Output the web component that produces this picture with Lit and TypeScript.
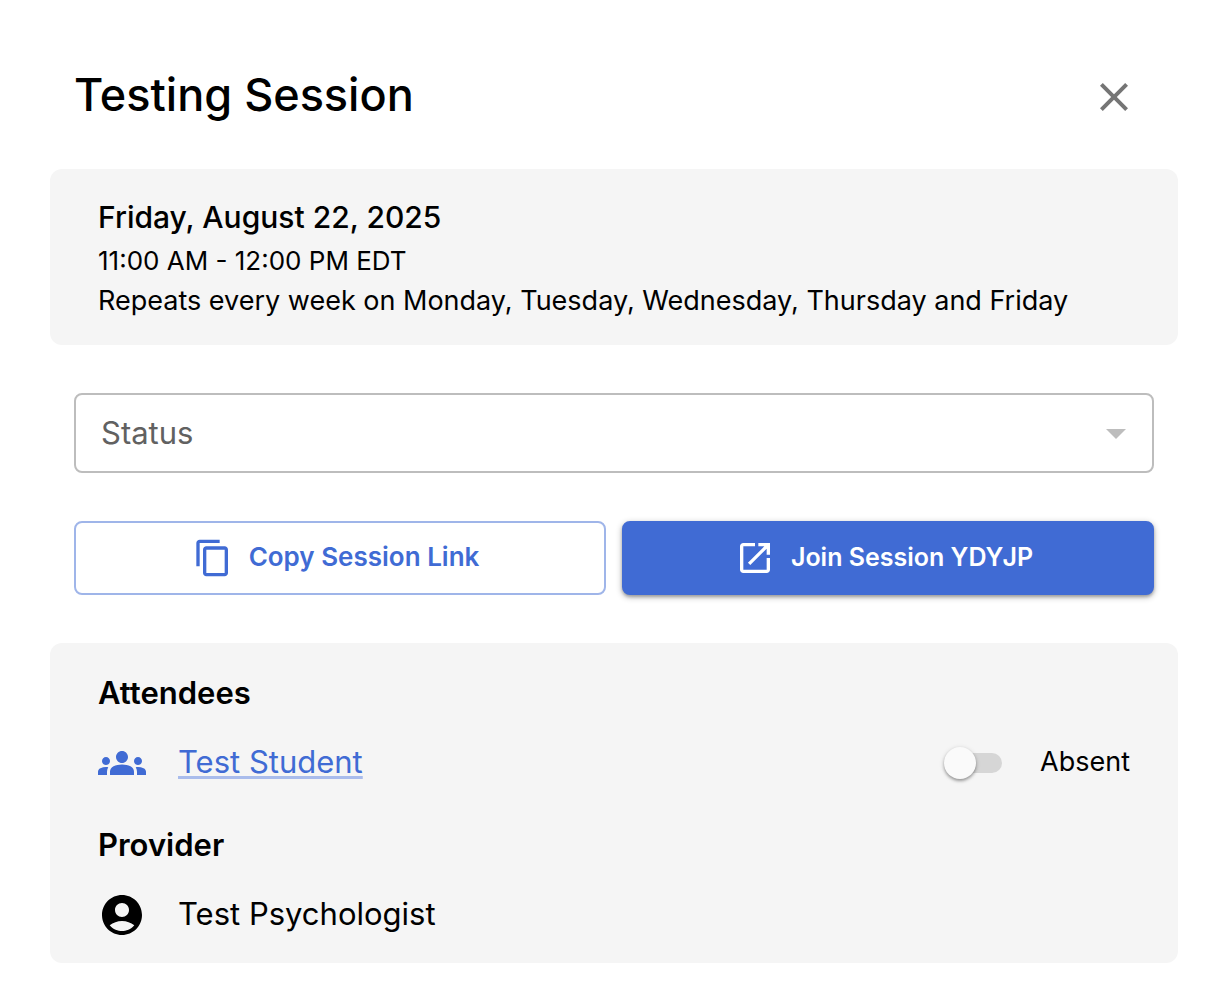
import { LitElement, html, css } from "lit";
import { customElement, property, state } from "lit/decorators.js";

const ICONS: Record<string, string> = {
  close:
    "M19 6.41 17.59 5 12 10.59 6.41 5 5 6.41 10.59 12 5 17.59 6.41 19 12 13.41 17.59 19 19 17.59 13.41 12z",
  copy:
    "M16 1H4c-1.1 0-2 .9-2 2v14h2V3h12V1zm3 4H8c-1.1 0-2 .9-2 2v14c0 1.1.9 2 2 2h11c1.1 0 2-.9 2-2V7c0-1.1-.9-2-2-2zm0 16H8V7h11v14z",
  open:
    "M19 19H5V5h7V3H5c-1.11 0-2 .9-2 2v14c0 1.1.89 2 2 2h14c1.1 0 2-.9 2-2v-7h-2v7zM14 3v2h3.59l-9.83 9.83 1.41 1.41L19 6.41V10h2V3h-7z",
  groups:
    "M12 12.75c1.63 0 3.07.39 4.24.9 1.08.48 1.76 1.56 1.76 2.73V18H6v-1.61c0-1.18.68-2.26 1.76-2.73 1.17-.52 2.61-.91 4.24-.91zM4 13c1.1 0 2-.9 2-2s-.9-2-2-2-2 .9-2 2 .9 2 2 2zm1.13 1.1c-.37-.06-.74-.1-1.13-.1-.99 0-1.93.21-2.78.58C.48 14.9 0 15.62 0 16.43V18h4.5v-1.61c0-.83.23-1.61.63-2.29zM20 13c1.1 0 2-.9 2-2s-.9-2-2-2-2 .9-2 2 .9 2 2 2zm4 3.43c0-.81-.48-1.53-1.22-1.85-.85-.37-1.79-.58-2.78-.58-.39 0-.76.04-1.13.1.4.68.63 1.46.63 2.29V18H24v-1.57zM12 6c1.66 0 3 1.34 3 3s-1.34 3-3 3-3-1.34-3-3 1.34-3 3-3z",
  account:
    "M12 2C6.48 2 2 6.48 2 12s4.48 10 10 10 10-4.48 10-10S17.52 2 12 2zm0 4c1.93 0 3.5 1.57 3.5 3.5S13.93 13 12 13s-3.5-1.57-3.5-3.5S10.07 6 12 6zm0 14c-2.03 0-4.43-.82-6.14-2.88C7.55 15.8 9.68 15 12 15s4.45.8 6.14 2.12C16.43 19.18 14.03 20 12 20z",
  arrow: "M7 10l5 5 5-5z",
};

@customElement("ui-icon")
export class UiIcon extends LitElement {
  @property() name = "close";

  static styles = css`
    :host {
      display: block;
      flex: none;
      width: 48px;
      height: 48px;
    }
    .glyph {
      display: block;
      width: 100%;
      height: 100%;
      fill: currentColor;
    }
  `;

  render() {
    return html`<svg class="glyph" viewBox="0 0 24 24" aria-hidden="true">
      <path d=${ICONS[this.name]}></path>
    </svg>`;
  }
}

@customElement("app-root")
export class AppRoot extends LitElement {
  @state() private attending = false;

  static styles = css`
    :host {
      display: block;
      background: #fff;
      color: #000;
      font-family: Inter, "Liberation Sans", sans-serif;
      font-size: 27px;
      line-height: 40px;
      --blue: #406bd4;
    }
    * {
      box-sizing: border-box;
    }
    .dialog {
      display: flex;
      flex-direction: column;
      gap: 48px;
      padding: 73px 38px 43px 50px;
    }
    .header {
      display: flex;
      align-items: center;
      justify-content: space-between;
      padding: 0 40px 0 24px;
    }
    h1,
    h2,
    p {
      margin: 0;
    }
    h1 {
      padding-bottom: 4px;
      font-size: 45px;
      line-height: 44px;
      font-weight: 500;
    }
    button,
    select {
      font: inherit;
      cursor: pointer;
    }
    .close {
      padding: 0;
      border: 0;
      background: none;
      color: #757575;
    }
    .card {
      background: #f5f5f5;
      border-radius: 12px;
    }
    .when {
      padding: 24px 48px;
    }
    .date {
      font-size: 30px;
      line-height: 48px;
      font-weight: 500;
    }
    .time {
      font-size: 26px;
    }
    .field {
      display: grid;
      align-items: center;
      margin: 0 24px;
    }
    .select {
      grid-area: 1 / 1;
      width: 100%;
      height: 80px;
      padding: 0 72px 0 25px;
      border: 2px solid #bdbdbd;
      border-radius: 8px;
      background: #fff;
      color: #616161;
      font-size: 31px;
      appearance: none;
    }
    .arrow {
      grid-area: 1 / 1;
      justify-self: end;
      margin-right: 14px;
      color: #bdbdbd;
      pointer-events: none;
    }
    .actions {
      display: grid;
      grid-template-columns: 1fr 1fr;
      gap: 16px;
      margin: 0 24px;
    }
    .action {
      display: flex;
      align-items: center;
      justify-content: center;
      gap: 16px;
      height: 74px;
      padding: 0 24px 0 16px;
      border: 2px solid #9fb5e9;
      border-radius: 8px;
      background: #fff;
      color: var(--blue);
      font-size: 26px;
      font-weight: 600;
    }
    .action ui-icon {
      width: 40px;
      height: 40px;
    }
    .primary {
      border-color: var(--blue);
      background: var(--blue);
      color: #fff;
      font-size: 25px;
      box-shadow: 0 2px 6px rgba(0, 0, 0, 0.3), 0 2px 3px rgba(0, 0, 0, 0.2);
    }
    .people {
      display: flex;
      flex-direction: column;
      gap: 38px;
      padding: 30px 48px 24px;
    }
    .group {
      display: flex;
      flex-direction: column;
      gap: 26px;
    }
    h2 {
      font-size: 31px;
      line-height: 40px;
      font-weight: 600;
    }
    .row {
      display: flex;
      align-items: center;
      gap: 32px;
      font-size: 31px;
      line-height: 40px;
    }
    .label {
      padding-bottom: 2px;
    }
    .groups {
      color: var(--blue);
    }
    .link {
      color: var(--blue);
      text-decoration: underline;
      text-decoration-color: #a9bcec;
      text-decoration-thickness: 3px;
      text-underline-offset: 3px;
      text-decoration-skip-ink: none;
    }
    .presence {
      display: flex;
      align-items: center;
      gap: 38px;
      margin-left: auto;
      font-size: 27px;
      cursor: pointer;
    }
    .switch {
      appearance: none;
      display: flex;
      align-items: center;
      width: 56px;
      height: 20px;
      margin: 0;
      border-radius: 10px;
      background: #d6d6d6;
      cursor: pointer;
    }
    .switch::before {
      content: "";
      width: 32px;
      height: 32px;
      flex: none;
      margin-left: -2px;
      border-radius: 50%;
      background: #fafafa;
      box-shadow: 0 2px 3px rgba(0, 0, 0, 0.3), 0 1px 5px rgba(0, 0, 0, 0.15);
    }
    .switch:checked {
      background: #9fb5e9;
    }
    .switch:checked::before {
      margin-left: 26px;
      background: var(--blue);
    }
  `;

  private toggle(e: Event) {
    this.attending = (e.target as HTMLInputElement).checked;
  }

  render() {
    return html`
      <main class="dialog">
        <header class="header">
          <h1>Testing Session</h1>
          <button class="close" type="button" aria-label="Close">
            <ui-icon name="close"></ui-icon>
          </button>
        </header>

        <section class="card when">
          <p class="date">Friday, August 22, 2025</p>
          <p class="time">11:00 AM - 12:00 PM EDT</p>
          <p>Repeats every week on Monday, Tuesday, Wednesday, Thursday and Friday</p>
        </section>

        <div class="field">
          <select class="select" aria-label="Status">
            <option>Status</option>
          </select>
          <ui-icon class="arrow" name="arrow"></ui-icon>
        </div>

        <div class="actions">
          <button class="action" type="button">
            <ui-icon name="copy"></ui-icon><span class="label">Copy Session Link</span>
          </button>
          <button class="action primary" type="button">
            <ui-icon name="open"></ui-icon><span class="label">Join Session YDYJP</span>
          </button>
        </div>

        <section class="card people">
          <div class="group">
            <h2>Attendees</h2>
            <div class="row">
              <ui-icon class="groups" name="groups"></ui-icon>
              <a class="link label" href="#student">Test Student</a>
              <label class="presence">
                <input
                  class="switch"
                  type="checkbox"
                  role="switch"
                  .checked=${this.attending}
                  @change=${this.toggle}
                />
                <span class="label">${this.attending ? "Present" : "Absent"}</span>
              </label>
            </div>
          </div>
          <div class="group">
            <h2>Provider</h2>
            <div class="row">
              <ui-icon name="account"></ui-icon>
              <span class="label">Test Psychologist</span>
            </div>
          </div>
        </section>
      </main>
    `;
  }
}
